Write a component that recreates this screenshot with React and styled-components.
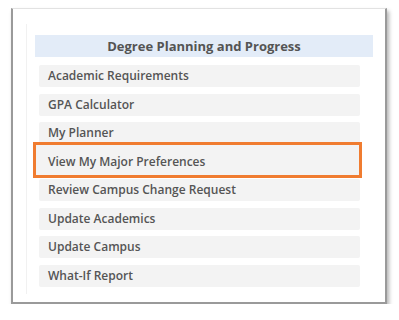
import styled, { createGlobalStyle } from "styled-components";

const Global = createGlobalStyle`
  body {
    margin: 0;
    background: #ffffff;
    font-family: "Open Sans", "Liberation Sans", sans-serif;
  }
`;

const Frame = styled.div`
  box-sizing: border-box;
  margin: 8px 0 0 11px;
  width: 376px;
  height: 296px;
  background: #ffffff;
  border-top: 1px solid #e2e2e2;
  border-left: 2px solid #9a9a9a;
  border-right: 2px solid #9a9a9a;
  border-bottom: 2px solid #9a9a9a;
  box-shadow: 2px 3px 4px rgba(0, 0, 0, 0.3);
  padding: 15px 0 0 13px;
`;

const Panel = styled.div`
  box-sizing: border-box;
  width: 356px;
  height: 270px;
  border-left: 1px solid #f1f1f1;
  padding: 11px 9px 0 8px;
`;

const Header = styled.div`
  height: 22px;
  background: #e3ecf8;
  color: #545454;
  font-weight: 700;
  font-size: 13px;
  line-height: 22px;
  text-align: center;
`;

const List = styled.div`
  display: flex;
  flex-direction: column;
  gap: 6.5px;
  margin: 8px 13px 0 4px;
`;

const Item = styled.div`
  position: relative;
  height: 22px;
  border-radius: 2px;
  background: #f3f3f3;
  color: #555555;
  font-weight: 600;
  font-size: 12px;
  line-height: 22px;
  padding-left: 9px;

  ${(p) =>
    p.$highlight &&
    `
    &::before {
      content: "";
      position: absolute;
      top: -8.5px;
      bottom: -5.5px;
      left: -6px;
      right: -2px;
      border: 3.5px solid #f07c30;
      background: #f3f3f3;
    }
  `}
`;

const Label = styled.span`
  position: relative;
`;

const items = [
  "Academic Requirements",
  "GPA Calculator",
  "My Planner",
  "View My Major Preferences",
  "Review Campus Change Request",
  "Update Academics",
  "Update Campus",
  "What-If Report",
];

export default function App() {
  return (
    <>
      <Global />
      <Frame>
        <Panel>
          <Header>Degree Planning and Progress</Header>
          <List>
            {items.map((t) => (
              <Item key={t} $highlight={t === "View My Major Preferences"}>
                <Label>{t}</Label>
              </Item>
            ))}
          </List>
        </Panel>
      </Frame>
    </>
  );
}
